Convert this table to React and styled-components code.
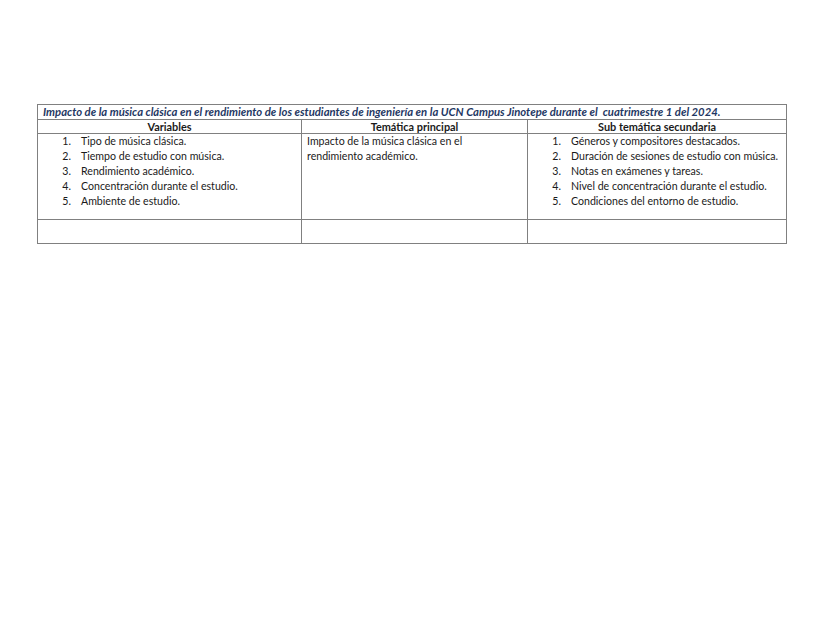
import React from 'react';
import styled, { createGlobalStyle } from 'styled-components';

const variables = [
  'Tipo de música clásica.',
  'Tiempo de estudio con música.',
  'Rendimiento académico.',
  'Concentración durante el estudio.',
  'Ambiente de estudio.',
];

const subTemas = [
  'Géneros y compositores destacados.',
  'Duración de sesiones de estudio con música.',
  'Notas en exámenes y tareas.',
  'Nivel de concentración durante el estudio.',
  'Condiciones del entorno de estudio.',
];

const GlobalStyle = createGlobalStyle`
  html, body {
    margin: 0;
    padding: 0;
    background: #ffffff;
  }
  body {
    font-family: Lato, "Open Sans", sans-serif;
    color: #1a1a1a;
  }
`;

const Page = styled.div`
  width: 829px;
  height: 640px;
  padding: 104px 0 0 37px;
  box-sizing: border-box;
`;

const Table = styled.table`
  border-collapse: collapse;
  width: 749px;
  table-layout: fixed;
  font-size: 10.6px;
`;

const Cell = styled.td`
  border: 1px solid #808080;
  padding: 0 5px;
  vertical-align: top;
  line-height: ${({ $lh }) => $lh || 15}px;
  height: ${({ $h }) => ($h ? `${$h}px` : 'auto')};
  text-align: ${({ $center }) => ($center ? 'center' : 'left')};
`;

const HeadCell = styled(Cell)`
  text-align: center;
  font-weight: 700;
  font-size: 10.9px;
`;

const Title = styled.span`
  font-style: italic;
  font-weight: 700;
  font-size: 11.3px;
  color: #1f3864;
  white-space: pre;
`;

const List = styled.ol`
  margin: 0;
  padding: 0;
  list-style: none;
`;

const Item = styled.li`
  display: flex;
  white-space: nowrap;
`;

const Num = styled.span`
  width: 28px;
  text-align: right;
  flex-shrink: 0;
`;

const ItemText = styled.span`
  margin-left: 10px;
`;

function NumberedList({ items }) {
  return (
    <List>
      {items.map((t, i) => (
        <Item key={t}>
          <Num>{i + 1}.</Num>
          <ItemText>{t}</ItemText>
        </Item>
      ))}
    </List>
  );
}

export default function App() {
  return (
    <Page>
      <GlobalStyle />
      <Table>
        <colgroup>
          <col style={{ width: 264 }} />
          <col style={{ width: 226 }} />
          <col style={{ width: 259 }} />
        </colgroup>
        <tbody>
          <tr>
            <Cell colSpan={3} $lh={13} $h={13}>
              <Title>
                {'Impacto de la música clásica en el rendimiento de los estudiantes de ingeniería en la UCN Campus Jinotepe durante el  cuatrimestre 1 del 2024.'}
              </Title>
            </Cell>
          </tr>
          <tr>
            <HeadCell $lh={13} $h={13}>Variables</HeadCell>
            <HeadCell $lh={13} $h={13}>Temática principal</HeadCell>
            <HeadCell $lh={13} $h={13}>Sub temática secundaria</HeadCell>
          </tr>
          <tr>
            <Cell $h={85}>
              <NumberedList items={variables} />
            </Cell>
            <Cell $h={85}>
              Impacto de la música clásica en el
              <br />
              rendimiento académico.
            </Cell>
            <Cell $h={85}>
              <NumberedList items={subTemas} />
            </Cell>
          </tr>
          <tr>
            <Cell $h={23} />
            <Cell $h={23} />
            <Cell $h={23} />
          </tr>
        </tbody>
      </Table>
    </Page>
  );
}
